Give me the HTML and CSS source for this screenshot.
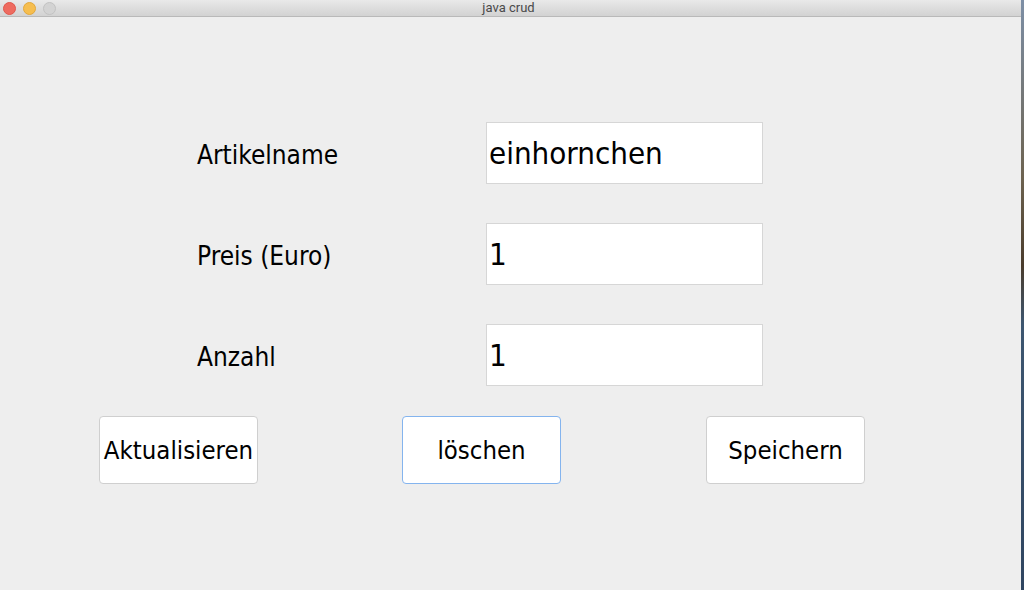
FILE: index.html
```html
<!DOCTYPE html>
<html>
<head>
  <title>java crud</title>
  <link rel="stylesheet" href="styles.css">
</head>
<body>

  <div class="window">
    <div class="titlebar">
      <div class="lights">
        <span class="light red"></span>
        <span class="light yellow"></span>
        <span class="light off"></span>
      </div>
      <div class="title">java crud</div>
    </div>

    <div class="content">
      <form class="fields">
        <label for="name">Artikelname</label>
        <input id="name" type="text" value="einhornchen">

        <label for="price">Preis (Euro)</label>
        <input id="price" type="text" value="1">

        <label for="count">Anzahl</label>
        <input id="count" type="text" value="1">
      </form>

      <div class="actions">
        <button type="button">Aktualisieren</button>
        <button type="button" class="focused">löschen</button>
        <button type="button">Speichern</button>
      </div>
    </div>
  </div>

  <div class="desktop"></div>

</body>
</html>
```

FILE: styles.css
```css
body {
  margin: 0;
  height: 590px;
  display: flex;
  overflow: hidden;
  font-family: "DejaVu Sans Condensed", "DejaVu Sans", sans-serif;
  color: #000;
}

.window {
  width: 1021px;
  background-color: #eeeeee;
}

.desktop {
  flex: 1;
  background: linear-gradient(#7d8fa6 0%, #6d6350 30%, #4a3c2c 45%, #3d5670 55%, #2f4560 100%);
}

/* title bar */
.titlebar {
  height: 16px;
  border-bottom: 1px solid #b9b9b9;
  background: linear-gradient(#e9e9e9, #d2d2d2);
  display: flex;
  align-items: center;
  position: relative;
}

.lights {
  display: flex;
  gap: 7px;
  padding-left: 3px;
}

.light {
  width: 13px;
  height: 13px;
  border-radius: 50%;
  box-sizing: border-box;
}

.red {
  background-color: #ee6b60;
  border: 1px solid #e0574c;
}

.yellow {
  background-color: #f6be4f;
  border: 1px solid #e2a83c;
}

.off {
  background-color: #d3d3d3;
  border: 1px solid #c2c2c2;
}

.title {
  position: absolute;
  left: 0;
  right: 0;
  top: 0;
  text-align: center;
  font-family: "Roboto", "Liberation Sans", sans-serif;
  font-size: 13px;
  line-height: 15px;
  color: #4a4a4a;
  padding-right: 4px;
}

/* form */
.content {
  padding-top: 105px;
}

.fields {
  display: grid;
  grid-template-columns: 289px 277px;
  grid-auto-rows: 62px;
  row-gap: 39px;
  margin: 0 0 0 197px;
  align-items: center;
}

.fields label {
  font-size: 26px;
  padding-top: 4px;
}

.fields input {
  height: 62px;
  box-sizing: border-box;
  border: 1px solid #d6d6d6;
  background-color: #fff;
  padding: 0 2px;
  font-family: "DejaVu Sans Condensed", "DejaVu Sans", sans-serif;
  font-size: 31px;
  color: #000;
  outline: none;
}

.actions {
  display: flex;
  gap: 144px;
  margin: 30px 0 0 99px;
}

.actions button {
  width: 159px;
  height: 68px;
  box-sizing: border-box;
  border: 1px solid #cfcfcf;
  border-radius: 4px;
  background-color: #fff;
  font-family: "DejaVu Sans Condensed", "DejaVu Sans", sans-serif;
  font-size: 25.5px;
  color: #000;
  padding: 0;
}

.actions .focused {
  border-color: #84b4ee;
}

.actions button:last-child {
  margin-left: 1px;
}
```
